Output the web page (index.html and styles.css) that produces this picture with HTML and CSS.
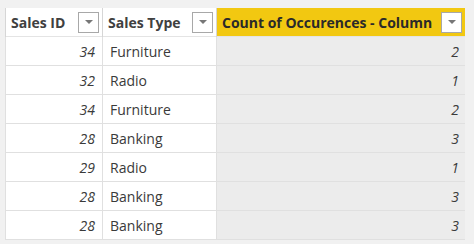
FILE: index.html
```html
<!DOCTYPE html>
<html>
<head>
<meta charset="utf-8">
<link rel="stylesheet" href="styles.css">
</head>
<body>
<div class="wrap">
  <table class="grid">
    <thead>
      <tr>
        <th class="c1"><div class="hd"><span>Sales ID</span><span class="dd"><svg width="8" height="4" viewBox="0 0 8 4"><path d="M0 0H8L4 4Z" fill="#777"/></svg></span></div></th>
        <th class="c2"><div class="hd"><span>Sales Type</span><span class="dd"><svg width="8" height="4" viewBox="0 0 8 4"><path d="M0 0H8L4 4Z" fill="#777"/></svg></span></div></th>
        <th class="c3"><div class="hd"><span>Count of Occurences - Column</span><span class="dd"><svg width="8" height="4" viewBox="0 0 8 4"><path d="M0 0H8L4 4Z" fill="#777"/></svg></span></div></th>
      </tr>
    </thead>
    <tbody>
      <tr><td class="num">34</td><td>Furniture</td><td class="num calc">2</td></tr>
      <tr><td class="num">32</td><td>Radio</td><td class="num calc">1</td></tr>
      <tr><td class="num">34</td><td>Furniture</td><td class="num calc">2</td></tr>
      <tr><td class="num">28</td><td>Banking</td><td class="num calc">3</td></tr>
      <tr><td class="num">29</td><td>Radio</td><td class="num calc">1</td></tr>
      <tr><td class="num">28</td><td>Banking</td><td class="num calc">3</td></tr>
      <tr><td class="num">28</td><td>Banking</td><td class="num calc">3</td></tr>
    </tbody>
  </table>
</div>
</body>
</html>
```

FILE: styles.css
```css
html, body {
  margin: 0;
  padding: 0;
  background: #f1f1f1;
}
.wrap {
  padding: 8px 0 0 5px;
}
.grid {
  border-collapse: collapse;
  table-layout: fixed;
  width: 460px;
  font-family: "Open Sans", "Noto Sans", sans-serif;
  color: #3a3a3a;
  background: #fff;
}
.grid th {
  height: 28px;
  padding: 0;
  text-align: left;
  font-size: 14px;
  font-weight: 700;
  background: #fff;
  border-right: 1px solid #d6d6d6;
  border-left: 1px solid #d6d6d6;
  color: #404040;
}
.grid th.c1 { width: 96px; }
.grid th.c2 { width: 113px; }
.grid th.c3 { background: #f2c811; border-right: none; color: #2a2a2a; }
.hd {
  display: flex;
  align-items: center;
  justify-content: space-between;
  padding: 0 3px 0 5px;
}
.dd {
  width: 21px;
  height: 21px;
  box-sizing: border-box;
  border: 1px solid #a8a8a8;
  background: #fff;
  display: flex;
  align-items: center;
  justify-content: center;
}
.grid td {
  height: 28px;
  padding: 0 7px;
  font-size: 14px;
  border: 1px solid #e0e0e0;
  border-top: 1px solid #e4e4e4;
}
.grid td.num {
  text-align: right;
  font-style: italic;
}
.grid td.calc {
  background: #ececec;
  border-left: 1px solid #e0e0e0;
  border-right: none;
  padding-right: 6px;
}
```
